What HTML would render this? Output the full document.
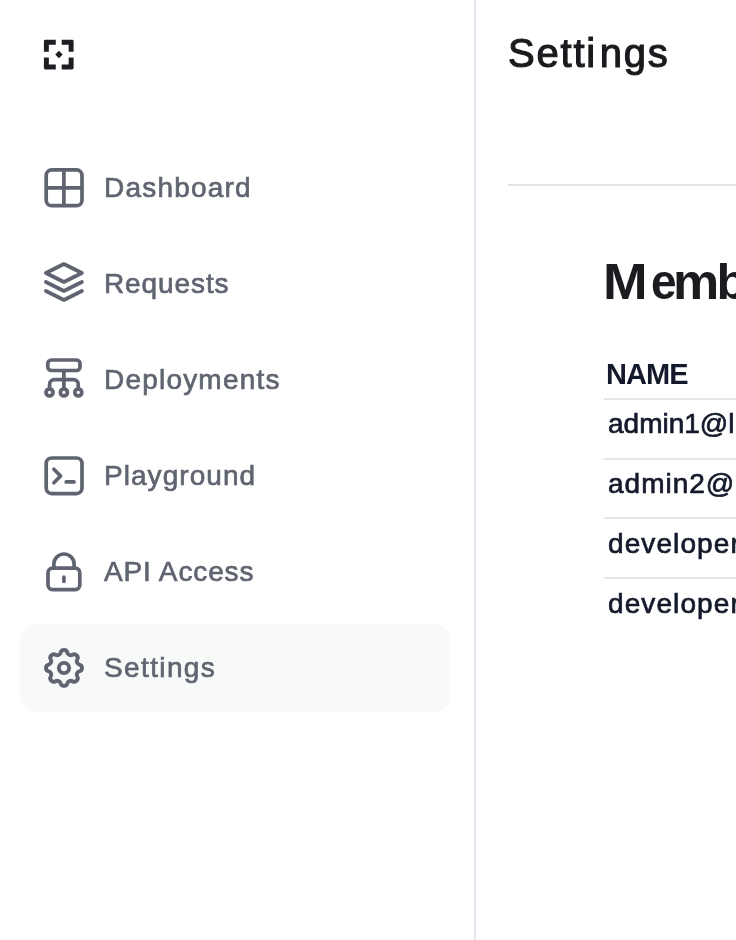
<!DOCTYPE html>
<html>
<head>
<meta charset="utf-8">
<style>
html,body{margin:0;padding:0;background:#fff;width:736px;height:940px;overflow:hidden;}
body{font-family:"Liberation Sans",sans-serif;position:relative;}
.t,.hdr,.h2,.th,.td{will-change:transform;}
.side{position:absolute;left:0;top:0;width:474px;height:940px;background:#fff;}
.bord{position:absolute;left:474px;top:0;width:2px;height:940px;background:#e2e5ef;}
.logo{position:absolute;left:44px;top:40px;width:30px;height:30px;}
.nav{position:absolute;left:20px;width:430px;height:88px;border-radius:16px;}
.nav.active{background:#f8f9f9;}
.nav svg{position:absolute;left:20px;top:20px;width:48px;height:48px;}
.nav .t{position:absolute;left:84px;top:0;height:88px;line-height:88px;font-size:28px;color:#5f6470;letter-spacing:1.2px;white-space:nowrap;-webkit-text-stroke:0.65px #5f6470;}
.hdr{position:absolute;left:508px;top:0;font-size:40px;color:#1a1b1e;white-space:nowrap;line-height:40px;letter-spacing:1.8px;-webkit-text-stroke:1.1px #1a1b1e;}
.hline{position:absolute;left:508px;top:184px;width:228px;height:2px;background:#e3e5ea;}
.h2{position:absolute;left:604px;font-size:50px;letter-spacing:-1.2px;font-weight:700;color:#1b1c20;white-space:nowrap;}
.th{position:absolute;left:605.5px;font-size:29px;letter-spacing:-0.9px;font-weight:700;color:#141a2b;white-space:nowrap;}
.row{position:absolute;left:604px;width:132px;height:2px;background:#e5e6ec;}
.td{position:absolute;left:608px;font-size:28px;color:#141a2b;white-space:nowrap;-webkit-text-stroke:0.7px #141a2b;}
</style>
</head>
<body>
<div class="side">
  <div class="nav" style="top:144px">
    <div class="t">Dashboard</div>
  </div>
  <div class="nav" style="top:240px">
    <div class="t" style="letter-spacing:0.9px">Requests</div>
  </div>
  <div class="nav" style="top:336px">
    <div class="t">Deployments</div>
  </div>
  <div class="nav" style="top:432px">
    <div class="t" style="letter-spacing:1.05px">Playground</div>
  </div>
  <div class="nav" style="top:528px">
    <div class="t" style="letter-spacing:0.87px">API Access</div>
  </div>
  <div class="nav active" style="top:624px">
    <div class="t" style="letter-spacing:1.37px">Settings</div>
  </div>
</div>
<svg class="icons" width="474" height="940" viewBox="0 0 474 940" style="position:absolute;left:0;top:0">
  <g fill="#1d1e22" transform="translate(43.9 39.8) scale(0.99)">
    <path d="M0 1.5Q0 0 1.5 0H12V5H5V12H0Z"/>
    <path d="M18 0H28.5Q30 0 30 1.5V12H25V5H18Z"/>
    <path d="M0 18H5V25H12V30H1.5Q0 30 0 28.5Z"/>
    <path d="M30 18V28.5Q30 30 28.5 30H18V25H25V18Z"/>
    <path d="M15.2 11L19 14.8L15.2 18.6L11.4 14.8Z"/>
  </g>
  <g fill="none" stroke="#5f6470" stroke-width="3.7" stroke-linecap="round" stroke-linejoin="round">
    <rect x="46.2" y="169.9" width="35.8" height="35.8" rx="5.5"/>
    <path d="M48 187.9H80.2M63.9 171.7V203.9"/>
    <path d="M63.9 264L45.9 273L63.9 282L81.9 273Z"/>
    <path d="M45.9 282L63.9 291L81.9 282M45.9 291L63.9 300L81.9 291"/>
    <rect x="47.8" y="360" width="32.2" height="10.5" rx="3.5"/>
    <path d="M63.9 370.5V389"/>
    <path d="M49.6 389V384.2A4.5 4.5 0 0 1 54.1 379.7H73.7A4.5 4.5 0 0 1 78.2 384.2V389"/>
    <circle cx="49.5" cy="392.4" r="3.5"/>
    <circle cx="63.9" cy="392.4" r="3.5"/>
    <circle cx="78.3" cy="392.4" r="3.5"/>
    <rect x="46.2" y="458" width="35.8" height="35.6" rx="5.5"/>
    <path d="M53.9 469.3L60.6 476L53.9 482.7M66.2 481.9H74"/>
    <rect x="48" y="568.2" width="31.8" height="21.4" rx="4.5"/>
    <path d="M53.9 568.2V564.1A10.1 10.1 0 0 1 74.1 564.1V568.2"/>
    <path d="M63.9 577V581.3"/>
    <g transform="translate(40 644) scale(2)" stroke-width="1.95">
      <path d="M10.325 4.317c.426 -1.756 2.924 -1.756 3.35 0a1.724 1.724 0 0 0 2.573 1.066c1.543 -.94 3.31 .826 2.37 2.37a1.724 1.724 0 0 0 1.065 2.572c1.756 .426 1.756 2.924 0 3.35a1.724 1.724 0 0 0 -1.066 2.573c.94 1.543 -.826 3.31 -2.37 2.37a1.724 1.724 0 0 0 -2.572 1.065c-.426 1.756 -2.924 1.756 -3.35 0a1.724 1.724 0 0 0 -2.573 -1.066c-1.543 .94 -3.31 -.826 -2.37 -2.37a1.724 1.724 0 0 0 -1.065 -2.572c-1.756 -.426 -1.756 -2.924 0 -3.35a1.724 1.724 0 0 0 1.066 -2.573c-.94 -1.543 .826 -3.31 2.37 -2.37c1 .608 2.296 .07 2.572 -1.065z"/>
    </g>
    <circle cx="64" cy="668" r="5.1" stroke-width="3.9"/>
  </g>
</svg>
<div class="bord"></div>
<div class="hdr" style="top:32.5px">Sett<span style="letter-spacing:4.5px">i</span>ngs</div>
<div class="hline"></div>
<div class="h2" style="top:252.5px;left:0;width:736px;height:60px;"><span style="position:absolute;left:603px;transform:scaleX(1.07);transform-origin:0 0">M</span><span style="position:absolute;left:650.7px;transform:scaleX(0.92);transform-origin:0 0">e</span><span style="position:absolute;left:673px;transform:scaleX(1.04);transform-origin:0 0">m</span><span style="position:absolute;left:716.6px">b</span></div>
<div class="th" style="top:357.5px">NAME</div>
<div class="row" style="top:398px"></div>
<div class="td" style="top:408px;width:126.5px;overflow:hidden">admin1@localhost</div>
<div class="row" style="top:458px"></div>
<div class="td" style="top:468px;letter-spacing:1px">admin2@localhost</div>
<div class="row" style="top:517px"></div>
<div class="td" style="top:528px;letter-spacing:1.1px">developer1@localhost</div>
<div class="row" style="top:577px"></div>
<div class="td" style="top:588px;letter-spacing:1.1px">developer2@localhost</div>
</body>
</html>
